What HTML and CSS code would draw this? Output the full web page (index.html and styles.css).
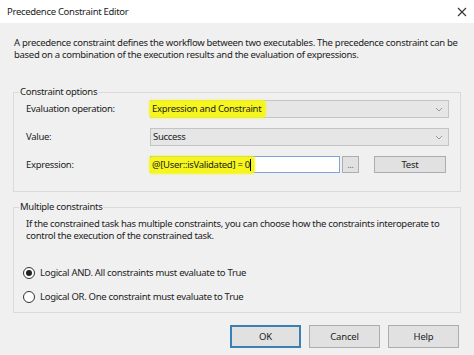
FILE: index.html
```html
<!DOCTYPE html>
<html lang="en">
<head>
    <meta charset="UTF-8">
    <meta name="viewport" content="width=device-width, initial-scale=1.0">
    <title>Precedence Constraint Editor</title>
    <link rel="stylesheet" href="styles.css">
</head>
<body>
    <div class="titlebar">
        <span class="title">Precedence Constraint Editor</span>
        <svg class="close" width="10" height="10" viewBox="0 0 10 10">
            <path d="M1 1 L9 9 M9 1 L1 9" stroke="#333" stroke-width="1.1" fill="none"/>
        </svg>
    </div>

    <p class="intro">A precedence constraint defines the workflow between two executables. The precedence constraint can be based on a combination of the execution results and the evaluation of expressions.</p>

    <fieldset class="group options">
        <legend>Constraint options</legend>

        <div class="row">
            <label>Evaluation operation:</label>
            <div class="select">
                <span class="mark">Expression and Constraint</span>
                <svg class="chevron" width="8" height="5" viewBox="0 0 8 5"><path d="M1 1 L4 4 L7 1" stroke="#999" fill="none"/></svg>
            </div>
        </div>

        <div class="row">
            <label>Value:</label>
            <div class="select">
                <span>Success</span>
                <svg class="chevron" width="8" height="5" viewBox="0 0 8 5"><path d="M1 1 L4 4 L7 1" stroke="#999" fill="none"/></svg>
            </div>
        </div>

        <div class="row">
            <label>Expression:</label>
            <div class="expr-line">
                <div class="textbox"><span class="mark">@[User::isValidated] = 0</span><span class="caret"></span></div>
                <button class="btn dots">...</button>
                <button class="btn test">Test</button>
            </div>
        </div>
    </fieldset>

    <fieldset class="group multi">
        <legend>Multiple constraints</legend>
        <p class="multi-text">If the constrained task has multiple constraints, you can choose how the constraints interoperate to control the execution of the constrained task.</p>

        <div class="radio-row">
            <span class="radio checked"></span>
            <span>Logical AND. All constraints must evaluate to True</span>
        </div>
        <div class="radio-row">
            <span class="radio"></span>
            <span>Logical OR. One constraint must evaluate to True</span>
        </div>
    </fieldset>

    <div class="actions">
        <button class="btn action focused">OK</button>
        <button class="btn action">Cancel</button>
        <button class="btn action">Help</button>
    </div>
</body>
</html>
```

FILE: styles.css
```css
body {
    font-family: 'Noto Sans', 'Open Sans', sans-serif;
    font-size: 9.5px;
    letter-spacing: -0.3px;
    line-height: 12px;
    color: #222;
    background-color: #f0f0f0;
    margin: 0;
    padding: 0;
    width: 474px;
    height: 355px;
    overflow: hidden;
}

.titlebar {
    height: 23px;
    background-color: #fff;
    display: flex;
    align-items: center;
    justify-content: space-between;
    padding: 0 7px 0 7px;
}

.intro {
    margin: 14px 12px 0 14px;
}

.group {
    border: 1px solid #dadada;
    margin: 0 13px 0 13px;
    padding: 0 11px 0 12px;
}

.group legend {
    margin-left: -7px;
    padding: 0 1px;
}

.options {
    margin-top: 25px;
    padding-bottom: 18px;
}

.row {
    display: grid;
    grid-template-columns: 124px 1fr;
    align-items: center;
    margin-top: 10px;
}

.options legend + .row {
    margin-top: 2px;
}

.select {
    height: 16px;
    border: 1px solid #c4c4c4;
    background-color: #e6e6e6;
    display: flex;
    align-items: center;
    justify-content: space-between;
    padding: 0 5px 0 2px;
}

.mark {
    background-color: #f6f61c;
    border-radius: 3px;
    padding: 2px 4px 2px 2px;
    margin-left: -3px;
    box-shadow: 0 0 2px 1px #f6f61c;
}

.expr-line {
    display: flex;
    align-items: center;
}

.textbox {
    width: 186px;
    height: 15px;
    border: 1px solid #7aa7d6;
    background-color: #fff;
    display: flex;
    align-items: center;
    padding-left: 2px;
}

.caret {
    width: 1px;
    height: 12px;
    background-color: #000;
    margin-left: -4px;
}

.btn {
    font-family: inherit;
    font-size: 9.5px;
    letter-spacing: -0.2px;
    color: #222;
    background-color: #e1e1e1;
    border: 1px solid #adadad;
    padding: 0;
    margin: 0;
}

.dots {
    width: 17px;
    height: 17px;
    margin-left: 2px;
    font-size: 8px;
    color: #555;
}

.test {
    width: 72px;
    height: 17px;
    margin-left: 15px;
}

.multi {
    margin-top: 9px;
    padding-bottom: 3px;
}

.multi-text {
    margin: 5px 0 0 0;
}

.radio-row {
    display: flex;
    align-items: center;
    gap: 5px;
    height: 24px;
    margin-left: -3px;
}

.multi-text + .radio-row {
    margin-top: 19px;
}

.radio {
    width: 10px;
    height: 10px;
    border: 1px solid #333;
    border-radius: 50%;
    background-color: #fff;
    display: flex;
    align-items: center;
    justify-content: center;
}

.radio.checked::after {
    content: '';
    width: 6px;
    height: 6px;
    border-radius: 50%;
    background-color: #222;
}

.actions {
    display: flex;
    justify-content: flex-end;
    gap: 8px;
    margin: 12px 15px 0 0;
}

.action {
    width: 71px;
    height: 23px;
}

.focused {
    border: 1px solid #3c7fb1;
    box-shadow: inset 0 0 0 1px #3c7fb1;
}
```
